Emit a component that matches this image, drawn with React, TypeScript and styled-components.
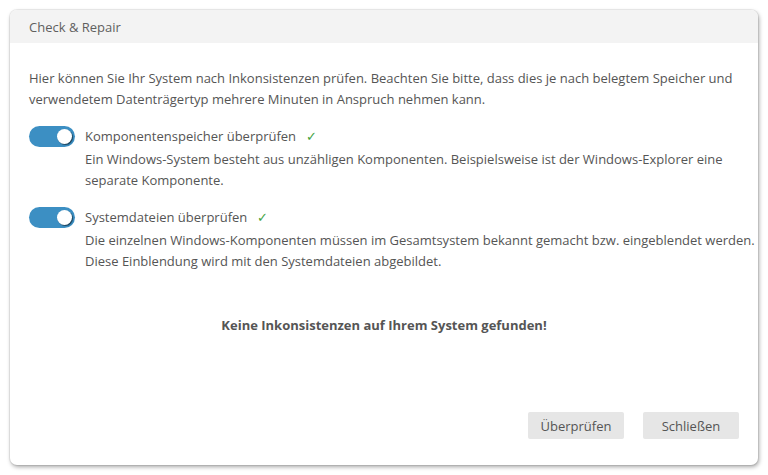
import React, { useState } from 'react'
import styled, { createGlobalStyle } from 'styled-components'

const GlobalStyle = createGlobalStyle`
  html, body {
    margin: 0;
    padding: 0;
    background: #ffffff;
  }
  body {
    font-family: "Open Sans", "Noto Sans", sans-serif;
  }
`

const Page = styled.div`
  width: 768px;
  height: 475px;
  padding: 10px 10px 10px 10px;
  box-sizing: border-box;
`

const Dialog = styled.div`
  width: 748px;
  height: 455px;
  box-sizing: border-box;
  background: #ffffff;
  border-radius: 7px;
  box-shadow: 0 0 0 1px rgba(0, 0, 0, 0.06), 1px 2px 4px rgba(0, 0, 0, 0.35);
  display: flex;
  flex-direction: column;
  overflow: hidden;
`

const TitleBar = styled.div`
  height: 33px;
  flex: 0 0 33px;
  background: #f3f3f3;
  display: flex;
  align-items: center;
  padding-left: 19px;
  font-size: 13px;
  color: #5f5f5f;
`

const Body = styled.div`
  flex: 1;
  display: flex;
  flex-direction: column;
  padding: 25px 19px 26px 19px;
  color: #555555;
  font-size: 13px;
  line-height: 21px;
`

const Intro = styled.p`
  margin: 0 0 15px 0;
  white-space: nowrap;
`

const Option = styled.div`
  display: grid;
  grid-template-columns: 46px 1fr;
  column-gap: 10px;
  row-gap: 2px;
  margin-bottom: 15px;
`

const OptionHead = styled.div`
  display: flex;
  align-items: center;
  height: 22px;
  gap: 10px;
`

const Description = styled.p`
  grid-column: 2;
  margin: 0;
  white-space: nowrap;
`

const Check = styled.span`
  color: #3fa33f;
  font-size: 13px;
`

const SwitchTrack = styled.button<{ $on: boolean }>`
  width: 46px;
  height: 21px;
  margin-top: 0.5px;
  border: none;
  padding: 0;
  border-radius: 11px;
  background: ${p => (p.$on ? '#3c8fc3' : '#c8c8c8')};
  position: relative;
  cursor: pointer;
`

const SwitchKnob = styled.span<{ $on: boolean }>`
  position: absolute;
  top: 3px;
  left: ${p => (p.$on ? '28px' : '3px')};
  width: 15px;
  height: 15px;
  border-radius: 50%;
  background: #ffffff;
  box-shadow: 1px 1px 1px rgba(0, 0, 0, 0.55);
`

const Status = styled.div`
  margin-top: 28px;
  text-align: center;
  font-weight: 700;
  color: #555555;
`

const Footer = styled.div`
  margin-top: auto;
  display: flex;
  justify-content: flex-end;
  gap: 19px;
`

const Button = styled.button`
  width: 96px;
  height: 27px;
  border: none;
  border-radius: 2px;
  background: #e6e6e6;
  color: #555555;
  font-family: inherit;
  font-size: 13px;
  cursor: pointer;
`

const Toggle: React.FC<{ on: boolean; onChange: () => void }> = ({ on, onChange }) => (
  <SwitchTrack $on={on} onClick={onChange}>
    <SwitchKnob $on={on} />
  </SwitchTrack>
)

const App: React.FC = () => {
  const [components, setComponents] = useState(true)
  const [files, setFiles] = useState(true)

  return (
    <>
      <GlobalStyle />
      <Page>
        <Dialog>
          <TitleBar>Check &amp; Repair</TitleBar>
          <Body>
            <Intro>
              Hier können Sie Ihr System nach Inkonsistenzen prüfen. Beachten Sie bitte, dass dies je nach belegtem Speicher und
              <br />
              verwendetem Datenträgertyp mehrere Minuten in Anspruch nehmen kann.
            </Intro>
            <Option>
              <Toggle on={components} onChange={() => setComponents(!components)} />
              <OptionHead>
                Komponentenspeicher überprüfen <Check>✓</Check>
              </OptionHead>
              <Description>
                Ein Windows-System besteht aus unzähligen Komponenten. Beispielsweise ist der Windows-Explorer eine
                <br />
                separate Komponente.
              </Description>
            </Option>
            <Option>
              <Toggle on={files} onChange={() => setFiles(!files)} />
              <OptionHead>
                Systemdateien überprüfen <Check>✓</Check>
              </OptionHead>
              <Description>
                Die einzelnen Windows-Komponenten müssen im Gesamtsystem bekannt gemacht bzw. eingeblendet werden.
                <br />
                Diese Einblendung wird mit den Systemdateien abgebildet.
              </Description>
            </Option>
            <Status>Keine Inkonsistenzen auf Ihrem System gefunden!</Status>
            <Footer>
              <Button>Überprüfen</Button>
              <Button>Schließen</Button>
            </Footer>
          </Body>
        </Dialog>
      </Page>
    </>
  )
}

export default App
